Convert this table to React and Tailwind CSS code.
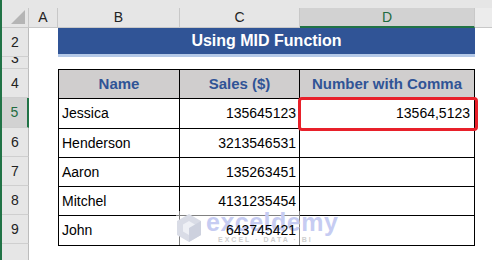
const rows = [
  { name: 'Jessica', sales: '135645123', result: '13564,5123' },
  { name: 'Henderson', sales: '3213546531', result: '' },
  { name: 'Aaron', sales: '135263451', result: '' },
  { name: 'Mitchel', sales: '4131235454', result: '' },
  { name: 'John', sales: '643745421', result: '' },
];

function ColHead({ label, w, active }) {
  return (
    <div
      className={`${w} h-full flex items-center justify-center border-r border-[#c8c8c8] text-[14px] ${
        active
          ? 'bg-[#d2d2d2] border-b-2 border-b-[#217346] text-[#1e6b3f]'
          : 'bg-[#e6e6e6] border-b border-b-[#c8c8c8] text-[#222]'
      }`}
    >
      {label}
    </div>
  );
}

function RowHead({ n, h, active }) {
  return (
    <div
      className={`${h} flex items-center justify-center border-b border-[#cfcfcf] text-[14px] ${
        active
          ? 'bg-[#d2d2d2] border-r-2 border-r-[#217346] text-[#1e6b3f]'
          : 'bg-[#e6e6e6] border-r border-r-[#bcbcbc] text-[#222]'
      }`}
    >
      {n}
    </div>
  );
}

function Watermark() {
  return (
    <div className="absolute z-10 left-[176px] top-[211px] w-[124px] h-[34px] bg-white/50 pointer-events-none">
      <div className="absolute left-[0px] top-[2px]">
        <svg width="26" height="30" viewBox="0 0 26 30">
          <path d="M13 1 L25 8 L25 22 L13 29 L1 22 L1 8 Z" fill="#d9dce6" />
          <path d="M13 8 L19 11.5 L19 18.5 L13 22 L7 18.5 L7 11.5 Z" fill="#eef0f5" />
          <path d="M13 15 L25 8 L25 22 L13 29 Z" fill="#cdd1de" />
        </svg>
      </div>
      <div className="absolute left-[30px] top-[-1px] text-[25px] font-bold text-[#c6ccf2] leading-none tracking-[0.5px] whitespace-nowrap">
        exceldemy
      </div>
      <div className="absolute left-[42px] top-[24px] text-[7px] font-bold text-[#cfcfcf] tracking-[2px] whitespace-nowrap">
        EXCEL · DATA · BI
      </div>
    </div>
  );
}

export default function App() {
  return (
    <div className="w-[492px] h-[260px] bg-white flex overflow-hidden relative font-['Liberation_Sans',Arial,sans-serif]">
      <div className="w-[2px] shrink-0 bg-[#217346]" />
      <div className="flex-1 flex flex-col">
        {/* top strip */}
        <div className="h-[8px] bg-[#e6e6e6]" />

        {/* column headers */}
        <div className="h-[20px] flex">
          <div className="w-[27px] h-full bg-[#e6e6e6] border-r border-b border-[#c8c8c8] flex items-end justify-end p-[3px]">
            <div className="w-0 h-0 border-l-[14px] border-l-transparent border-b-[14px] border-b-[#b5b5b5]" />
          </div>
          <ColHead label="A" w="w-[29px]" />
          <ColHead label="B" w="w-[122px]" />
          <ColHead label="C" w="w-[120px]" />
          <ColHead label="D" w="w-[175px]" active />
          <div className="flex-1 h-full bg-[#ececec] border-b border-[#c8c8c8]" />
        </div>

        <div className="flex flex-1">
          {/* row headers */}
          <div className="w-[27px] flex flex-col">
            <RowHead n="2" h="h-[29px]" />
            <div className="h-[12px] bg-[#e6e6e6] border-r border-r-[#bcbcbc] border-b border-[#cfcfcf] overflow-hidden flex justify-center">
              <span className="text-[14px] leading-[14px] text-[#222] -mt-[6px]">3</span>
            </div>
            <RowHead n="4" h="h-[29px]" />
            <RowHead n="5" h="h-[30px]" active />
            <RowHead n="6" h="h-[29px]" />
            <RowHead n="7" h="h-[29px]" />
            <RowHead n="8" h="h-[29px]" />
            <RowHead n="9" h="h-[29px]" />
            <div className="flex-1 bg-[#e6e6e6] border-r border-r-[#bcbcbc]" />
          </div>

          {/* sheet */}
          <div className="pl-[29px] flex flex-col">
            <div className="w-[417px] h-[29px] bg-[#305496] border-b-[3px] border-[#b4c9e8] flex items-center justify-center text-white font-bold text-[16px]">
              Using MID Function
            </div>
            <div className="h-[12px]" />
            <div className="w-[417px] border border-black">
              <div className="flex h-[29px] bg-[#d0cece] border-b border-black text-[#305496] font-bold text-[15px]">
                <div className="w-[121px] border-r border-black flex items-center justify-center">Name</div>
                <div className="w-[120px] border-r border-black flex items-center justify-center">Sales ($)</div>
                <div className="flex-1 flex items-center justify-center">Number with Comma</div>
              </div>
              {rows.map((r, i) => (
                <div
                  key={r.name}
                  className={`flex ${i === 0 ? 'h-[30px]' : 'h-[29px]'} ${
                    i < rows.length - 1 ? 'border-b border-black' : 'h-[28px]'
                  } text-[14px] text-black`}
                >
                  <div className="w-[121px] border-r border-black flex items-center pl-[3px]">
                    <span className="relative z-20">{r.name}</span>
                  </div>
                  <div className="w-[120px] border-r border-black flex items-center justify-end pr-[3px]">
                    <span className="relative z-20">{r.sales}</span>
                  </div>
                  <div className="flex-1 flex items-center justify-end pr-[4px]">
                    <span className="relative z-20">{r.result}</span>
                  </div>
                </div>
              ))}
            </div>
          </div>
        </div>
      </div>

      {/* highlight box */}
      <div className="absolute left-[298px] top-[97px] w-[180px] h-[34px] border-[3px] border-[#e8202a] rounded-[4px] pointer-events-none" />

      <Watermark />
    </div>
  );
}
